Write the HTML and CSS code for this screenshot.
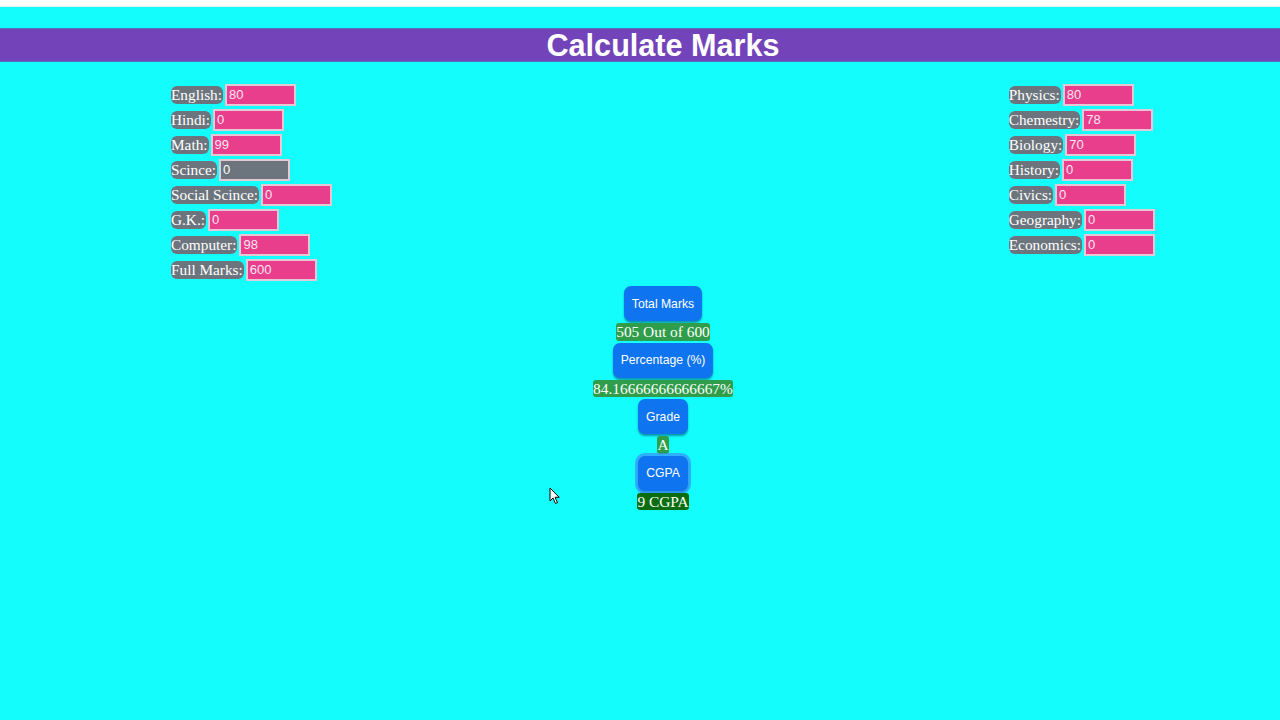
FILE: index.html
```html
<!DOCTYPE html>
<html lang="en">
<head>
<meta charset="utf-8">
<title>Calculate Marks</title>
<link rel="stylesheet" href="styles.css">
</head>
<body>
<div class="topbar"></div>
<h1 class="title"><span>Calculate Marks</span></h1>
<div class="subjects">
  <div class="col">
    <div class="row"><span class="lbl">English:</span><input class="inp" value="80"></div>
    <div class="row"><span class="lbl">Hindi:</span><input class="inp" value="0"></div>
    <div class="row"><span class="lbl">Math:</span><input class="inp" value="99"></div>
    <div class="row"><span class="lbl">Scince:</span><input class="inp gray" value="0"></div>
    <div class="row"><span class="lbl">Social Scince:</span><input class="inp" value="0"></div>
    <div class="row"><span class="lbl">G.K.:</span><input class="inp" value="0"></div>
    <div class="row"><span class="lbl">Computer:</span><input class="inp" value="98"></div>
    <div class="row"><span class="lbl">Full Marks:</span><input class="inp" value="600"></div>
  </div>
  <div class="col">
    <div class="row"><span class="lbl">Physics:</span><input class="inp" value="80"></div>
    <div class="row"><span class="lbl">Chemestry:</span><input class="inp" value="78"></div>
    <div class="row"><span class="lbl">Biology:</span><input class="inp" value="70"></div>
    <div class="row"><span class="lbl">History:</span><input class="inp" value="0"></div>
    <div class="row"><span class="lbl">Civics:</span><input class="inp" value="0"></div>
    <div class="row"><span class="lbl">Geography:</span><input class="inp" value="0"></div>
    <div class="row"><span class="lbl">Economics:</span><input class="inp" value="0"></div>
  </div>
</div>
<div class="results">
  <button class="btn">Total Marks</button>
  <span class="res">505 Out of 600</span>
  <button class="btn">Percentage (%)</button>
  <span class="res">84.16666666666667%</span>
  <button class="btn">Grade</button>
  <span class="res">A</span>
  <button class="btn focus">CGPA</button>
  <span class="res dark">9 CGPA</span>
</div>
<svg class="cursor" width="12" height="18" viewBox="0 0 12 18"><path d="M1 1 L1 14 L4 11 L6.5 16.5 L8.5 15.6 L6 10.3 L10.2 10.3 Z" fill="#fff" stroke="#000" stroke-width="1"/></svg>
</body>
</html>
```

FILE: styles.css
```css
html, body {
  margin: 0;
  padding: 0;
}
body {
  background: #13fdfd;
  min-height: 720px;
  font-family: "Liberation Serif", "Times New Roman", serif;
  position: relative;
}
.topbar {
  height: 6px;
  background: #ffffff;
  border-bottom: 1px solid #dfeeee;
}
.title {
  margin: 21px 0 0 0;
  height: 34px;
  background: #7243b9;
  border-top: 1px solid #5a6fc0;
  border-bottom: 1px solid #5a6fc0;
  box-sizing: border-box;
  color: #fff;
  font-family: "Liberation Sans", Arial, sans-serif;
  font-weight: bold;
  font-size: 30.6px;
  line-height: 32px;
  text-align: center;
  padding-left: 46px;
}
.subjects {
  display: flex;
  justify-content: space-between;
  padding: 20px 125px 0 171px;
}
.col {
  display: flex;
  flex-direction: column;
}
.row {
  height: 25px;
  display: flex;
  align-items: center;
  gap: 2px;
}
.lbl {
  background: #6c757d;
  color: #fff;
  font-size: 15.3px;
  line-height: 18px;
  border-radius: 6px;
  padding: 0 1px 0 0;
}
.inp {
  box-sizing: border-box;
  width: 71px;
  height: 22px;
  margin: 0;
  padding: 0 2px;
  background: #e83e8c;
  border: 2px solid #e3c9d6;
  color: #fde6f0;
  font-family: "Liberation Sans", Arial, sans-serif;
  font-size: 13px;
  outline: none;
}
.inp.gray {
  background: #6c757d;
  color: #fff;
}
.results {
  display: flex;
  flex-direction: column;
  align-items: center;
  gap: 2px;
  margin-top: 4px;
  padding-left: 46px;
}
.btn {
  height: 35px;
  padding: 0 8px;
  border: none;
  border-radius: 7px;
  background: #0f74ef;
  color: #fff;
  font-family: "Liberation Sans", Arial, sans-serif;
  font-size: 12.2px;
  box-shadow: 0 2px 2px rgba(0, 30, 80, 0.45);
  cursor: pointer;
}
.btn.focus {
  box-shadow: 0 0 0 3px rgba(60, 140, 250, 0.7), 0 2px 2px rgba(0, 30, 80, 0.45);
}
.res {
  background: #2f9d4a;
  color: #fff;
  font-size: 15.4px;
  line-height: 17.5px;
  border-radius: 3px;
}
.res.dark {
  background: #0a6e10;
}
.cursor {
  position: absolute;
  left: 549px;
  top: 487px;
}
```
